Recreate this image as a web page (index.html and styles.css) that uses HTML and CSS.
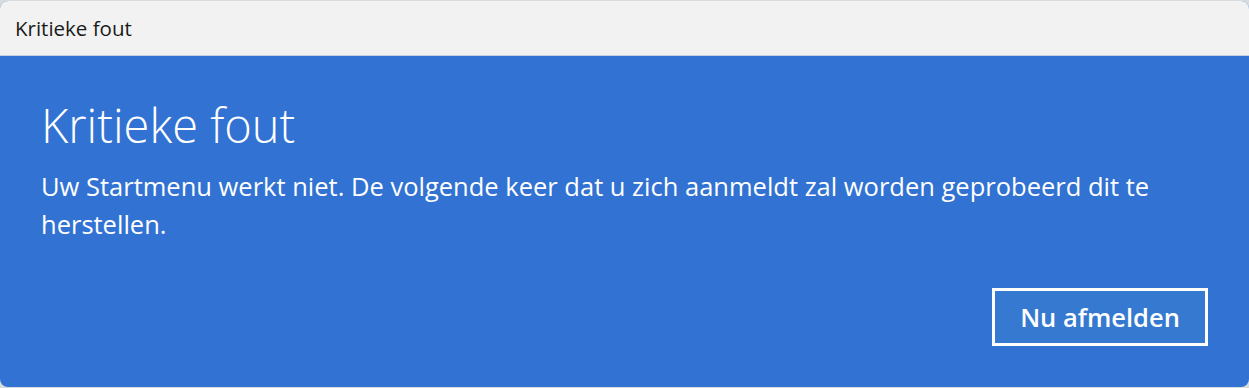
FILE: index.html
```html
<!DOCTYPE html>
<html lang="nl">
<head>
    <meta charset="UTF-8">
    <meta name="viewport" content="width=device-width, initial-scale=1.0">
    <title>Kritieke fout</title>
    <link rel="stylesheet" href="styles.css">
</head>
<body>
    <div class="window">
        <!-- Title bar -->
        <div class="titlebar">
            <span class="titlebar-text">Kritieke fout</span>
        </div>

        <!-- Error content -->
        <div class="dialog">
            <h1 class="dialog-title">Kritieke fout</h1>
            <p class="dialog-message">Uw Startmenu werkt niet. De volgende keer dat u zich aanmeldt zal worden geprobeerd dit te herstellen.</p>
            <div class="dialog-footer">
                <button class="btn-signout">Nu afmelden</button>
            </div>
        </div>
    </div>
</body>
</html>
```

FILE: styles.css
```css
* {
    margin: 0;
    padding: 0;
    box-sizing: border-box;
}

html, body {
    height: 100%;
}

body {
    font-family: 'Open Sans', 'Noto Sans', sans-serif;
    background: #d9dcdf;
    padding-top: 1px;
    overflow: hidden;
}

.window {
    height: 386px;
    display: flex;
    flex-direction: column;
    border-radius: 8px;
    overflow: hidden;
    background: #3172d3;
}

/* Title bar */
.titlebar {
    height: 55px;
    flex-shrink: 0;
    display: flex;
    align-items: center;
    padding: 0 15px;
    background: #f2f2f2;
    border-bottom: 1px solid #c3d1e2;
}

.titlebar-text {
    font-size: 20.5px;
    color: #1a1a1a;
}

/* Dialog body */
.dialog {
    flex: 1;
    display: flex;
    flex-direction: column;
    padding: 37px 41px 41px 41px;
    color: #fff;
}

.dialog-title {
    font-size: 47px;
    font-weight: 300;
    line-height: 64px;
}

.dialog-message {
    margin-top: 10px;
    font-size: 25.5px;
    line-height: 38px;
}

.dialog-footer {
    margin-top: auto;
    display: flex;
    justify-content: flex-end;
}

.btn-signout {
    width: 216px;
    height: 58px;
    font-family: inherit;
    font-size: 25.5px;
    font-weight: 600;
    color: #fff;
    background: #3579d0;
    border: 3px solid #fff;
    cursor: pointer;
}
```
